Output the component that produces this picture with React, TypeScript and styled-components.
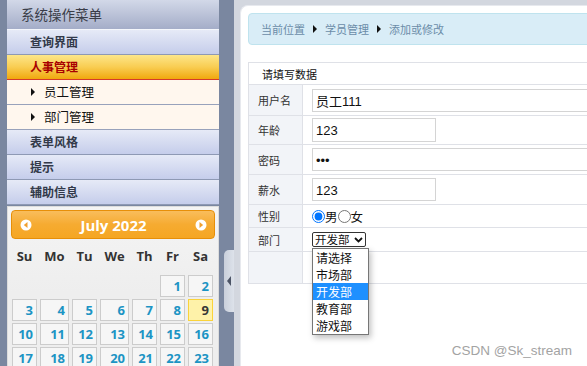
import React from 'react';
import styled, { createGlobalStyle } from 'styled-components';

const GlobalStyle = createGlobalStyle`
  html, body {
    margin: 0;
    padding: 0;
    overflow: hidden;
    width: 587px;
    height: 366px;
  }
  body {
    font-family: "Liberation Sans", "Noto Sans CJK SC", sans-serif;
  }
`;

const Page = styled.div`
  display: flex;
  width: 587px;
  height: 366px;
  background: #7a87a0;
  overflow: hidden;
`;

const Sidebar = styled.div`
  width: 212px;
  margin-left: 7px;
  flex-shrink: 0;
  display: flex;
  flex-direction: column;
`;

const SideHeader = styled.div`
  height: 29px;
  line-height: 29px;
  padding-left: 14px;
  border-bottom: 1px solid #f4f6fb;
  background: linear-gradient(#d2d8e8, #a4adc8);
  color: #3a3d48;
  font-size: 13.5px;
  font-family: "Noto Sans CJK SC", sans-serif;
`;

const MenuItem = styled.div<{ $active?: boolean }>`
  height: 24px;
  line-height: 24px;
  padding-left: 23px;
  font-family: "Noto Sans CJK SC", sans-serif;
  font-size: 12px;
  font-weight: 700;
  color: ${p => (p.$active ? '#a80000' : '#333a4a')};
  background: ${p =>
    p.$active
      ? 'linear-gradient(#fde68a, #f9cd52 50%, #f0a80e)'
      : 'linear-gradient(#e6eaf7, #c5cdeb)'};
  border-bottom: 1px solid ${p => (p.$active ? '#d63a2a' : '#8e99b4')};
`;

const SubItem = styled.div`
  height: 24px;
  line-height: 24px;
  display: flex;
  align-items: center;
  padding-left: 24px;
  gap: 9px;
  font-family: "Noto Sans CJK SC", sans-serif;
  font-size: 12.5px;
  color: #111;
  background: #fff7ee;
  border-bottom: 1px solid #98a2bb;
`;

const Arrow = styled.span`
  display: inline-block;
  width: 0;
  height: 0;
  border-left: 4px solid #111;
  border-top: 4px solid transparent;
  border-bottom: 4px solid transparent;
`;

const Calendar = styled.div`
  margin-top: 1px;
  padding: 3px;
  border: 1px solid #dcdcdc;
  background: linear-gradient(#f4f4f4, #eeeeee 40%);
  flex: 1;
`;

const CalHeader = styled.div`
  height: 27px;
  border: 1px solid #e78f08;
  border-radius: 4px;
  background: linear-gradient(#f9bd5c, #f6ab31 50%, #f5a623);
  display: flex;
  align-items: center;
  justify-content: space-between;
  padding: 0 7px 0 8px;
  color: #fff;
  font-family: "Open Sans", sans-serif;
  font-size: 15px;
  font-weight: 700;
`;

const NavIcon = styled.svg`
  width: 12px;
  height: 12px;
  display: block;
`;

const DayGrid = styled.div`
  display: grid;
  grid-template-columns: 25px 29px 25px 29px 25px 25px 25px;
  column-gap: 3px;
  row-gap: 2px;
  padding-left: 1px;
  margin-top: 2px;
  font-family: "Open Sans", sans-serif;
`;

const DayName = styled.div`
  height: 32px;
  line-height: 31px;
  text-align: center;
  font-size: 13px;
  font-weight: 700;
  color: #333;
`;

const DayCell = styled.div<{ $today?: boolean; $blank?: boolean }>`
  height: 20px;
  line-height: 20px;
  text-align: right;
  padding-right: 3px;
  font-size: 13px;
  font-weight: 700;
  visibility: ${p => (p.$blank ? 'hidden' : 'visible')};
  color: ${p => (p.$today ? '#363636' : '#1c94c4')};
  background: ${p => (p.$today ? '#fef2a9' : '#f6f6f6')};
  border: 1px solid ${p => (p.$today ? '#fad33a' : '#cccccc')};
`;

const Splitter = styled.div`
  width: 15px;
  flex-shrink: 0;
  position: relative;
`;

const Handle = styled.div`
  position: absolute;
  left: 5px;
  right: 0;
  top: 250px;
  height: 62px;
  background: linear-gradient(90deg, #c9cfdb, #dde2ea);
  border-radius: 5px 0 0 5px;
  display: flex;
  align-items: center;
  padding-left: 3px;
`;

const HandleArrow = styled.span`
  width: 0;
  height: 0;
  border-right: 4px solid #4c5466;
  border-top: 5px solid transparent;
  border-bottom: 5px solid transparent;
`;

const Frame = styled.div`
  flex: 1;
  min-width: 0;
  background: #d3d7df;
  padding: 5px 0 0 6px;
  overflow: hidden;
  position: relative;
`;

const Panel = styled.div`
  width: 420px;
  height: 100%;
  background: #fff;
  border-top: 1px solid #e7e9ee;
  border-left: 1px solid #e7e9ee;
  border-radius: 8px 0 0 0;
  padding: 7px 0 0 7px;
  box-sizing: border-box;
`;

const Breadcrumb = styled.div`
  height: 30px;
  border: 1px solid #bfe3ee;
  border-radius: 4px;
  background: #d9edf7;
  display: flex;
  align-items: center;
  gap: 8px;
  padding-left: 12px;
  font-family: "Noto Sans CJK SC", sans-serif;
  font-size: 11px;
  color: #6b8ca8;
`;

const FormTable = styled.table`
  margin-top: 17px;
  width: 420px;
  border-collapse: collapse;
  font-size: 11px;
  font-family: "Liberation Sans", "Noto Sans CJK SC", sans-serif;
  color: #222;
`;

const Row = styled.tr<{ $h: number }>`
  height: ${p => p.$h}px;
`;

const TitleCell = styled.td`
  border: 1px solid #dfe1e7;
  padding: 0 0 0 13px;
  font-family: "Noto Sans CJK SC", sans-serif;
  font-size: 11px;
  color: #111;
`;

const LabelCell = styled.td`
  width: 44px;
  border: 1px solid #dfe1e7;
  background: #f2f4f8;
  padding: 0 0 0 9px;
  font-family: "Noto Sans CJK SC", sans-serif;
  font-size: 11px;
  color: #333;
`;

const ValueCell = styled.td`
  border: 1px solid #dfe1e7;
  padding: 0 0 0 9px;
  position: relative;
`;

const TextBox = styled.div<{ $w?: number; $h: number }>`
  width: ${p => (p.$w ? `${p.$w}px` : '300px')};
  height: ${p => p.$h}px;
  line-height: ${p => p.$h}px;
  border: 1px solid #d4d4d4;
  box-sizing: border-box;
  padding-left: 3px;
  font-size: 13px;
  color: #111;
`;

const RadioGroup = styled.div`
  display: flex;
  align-items: center;
  font-family: "Noto Sans CJK SC", sans-serif;
  font-size: 12.5px;
  color: #111;
`;

const Radio = styled.input`
  width: 13px;
  height: 13px;
  margin: 0;
`;

const SelectBox = styled.div`
  width: 54px;
  height: 15px;
  box-sizing: border-box;
  border: 1px solid #333;
  border-radius: 2px;
  display: flex;
  align-items: center;
  justify-content: space-between;
  padding: 0 2px 0 2px;
  font-family: "Noto Sans CJK SC", sans-serif;
  font-size: 11.5px;
  color: #111;
  line-height: 13px;
`;

const OptionList = styled.div`
  position: absolute;
  left: 9px;
  top: 20px;
  width: 57px;
  box-sizing: border-box;
  border: 1px solid #767676;
  background: #fff;
  box-shadow: 2px 3px 6px rgba(0, 0, 0, 0.25);
  z-index: 5;
`;

const Option = styled.div<{ $selected?: boolean }>`
  height: 17px;
  line-height: 17px;
  padding-left: 3px;
  font-family: "Noto Sans CJK SC", sans-serif;
  font-size: 12px;
  color: ${p => (p.$selected ? '#fff' : '#111')};
  background: ${p => (p.$selected ? '#1e90ff' : '#fff')};
`;

const Watermark = styled.div`
  position: absolute;
  right: 15px;
  bottom: 8px;
  font-family: "Liberation Sans", sans-serif;
  font-size: 13.5px;
  color: #a3a3a3;
`;

const menuItems = ['表单风格', '提示', '辅助信息'];
const weekDays = ['Su', 'Mo', 'Tu', 'We', 'Th', 'Fr', 'Sa'];
const options = ['请选择', '市场部', '开发部', '教育部', '游戏部'];

function NavButton({ dir }: { dir: 'left' | 'right' }) {
  return (
    <NavIcon viewBox="0 0 12 12">
      <circle cx="6" cy="6" r="5.5" fill="#fff" />
      {dir === 'left' ? (
        <path d="M7.5 3 L3.8 6 L7.5 9 Z" fill="#f0a030" />
      ) : (
        <path d="M4.5 3 L8.2 6 L4.5 9 Z" fill="#f0a030" />
      )}
    </NavIcon>
  );
}

export default function App() {
  // July 2022 starts on a Friday
  const cells: (number | null)[] = [null, null, null, null, null];
  for (let d = 1; d <= 31; d++) cells.push(d);

  return (
    <>
      <GlobalStyle />
      <Page>
        <Sidebar>
          <SideHeader>系统操作菜单</SideHeader>
          <MenuItem>查询界面</MenuItem>
          <MenuItem $active>人事管理</MenuItem>
          <SubItem>
            <Arrow />
            员工管理
          </SubItem>
          <SubItem>
            <Arrow />
            部门管理
          </SubItem>
          {menuItems.map(m => (
            <MenuItem key={m}>{m}</MenuItem>
          ))}
          <Calendar>
            <CalHeader>
              <NavButton dir="left" />
              <span>July 2022</span>
              <NavButton dir="right" />
            </CalHeader>
            <DayGrid>
              {weekDays.map(w => (
                <DayName key={w}>{w}</DayName>
              ))}
              {cells.map((d, i) => (
                <DayCell key={i} $blank={d === null} $today={d === 9}>
                  {d}
                </DayCell>
              ))}
            </DayGrid>
          </Calendar>
        </Sidebar>

        <Splitter>
          <Handle>
            <HandleArrow />
          </Handle>
        </Splitter>

        <Frame>
          <Panel>
            <Breadcrumb>
              <span>当前位置</span>
              <Arrow />
              <span>学员管理</span>
              <Arrow />
              <span>添加或修改</span>
            </Breadcrumb>
            <FormTable>
              <tbody>
                <Row $h={22}>
                  <TitleCell colSpan={2}>请填写数据</TitleCell>
                </Row>
                <Row $h={31}>
                  <LabelCell>用户名</LabelCell>
                  <ValueCell>
                    <TextBox $h={23}>员工111</TextBox>
                  </ValueCell>
                </Row>
                <Row $h={29}>
                  <LabelCell>年龄</LabelCell>
                  <ValueCell>
                    <TextBox $w={124} $h={24}>123</TextBox>
                  </ValueCell>
                </Row>
                <Row $h={30}>
                  <LabelCell>密码</LabelCell>
                  <ValueCell>
                    <TextBox $h={23}>•••</TextBox>
                  </ValueCell>
                </Row>
                <Row $h={30}>
                  <LabelCell>薪水</LabelCell>
                  <ValueCell>
                    <TextBox $w={124} $h={23}>123</TextBox>
                  </ValueCell>
                </Row>
                <Row $h={23}>
                  <LabelCell>性别</LabelCell>
                  <ValueCell>
                    <RadioGroup>
                      <Radio type="radio" name="sex" defaultChecked />男
                      <Radio type="radio" name="sex" />女
                    </RadioGroup>
                  </ValueCell>
                </Row>
                <Row $h={24}>
                  <LabelCell>部门</LabelCell>
                  <ValueCell>
                    <SelectBox>
                      <span>开发部</span>
                      <svg width="9" height="6" viewBox="0 0 9 6">
                        <path d="M1 1 L4.5 4.5 L8 1" stroke="#111" strokeWidth="1.8" fill="none" />
                      </svg>
                    </SelectBox>
                    <OptionList>
                      {options.map(o => (
                        <Option key={o} $selected={o === '开发部'}>
                          {o}
                        </Option>
                      ))}
                    </OptionList>
                  </ValueCell>
                </Row>
                <Row $h={32}>
                  <LabelCell />
                  <ValueCell />
                </Row>
              </tbody>
            </FormTable>
          </Panel>
          <Watermark>CSDN @Sk_stream</Watermark>
        </Frame>
      </Page>
    </>
  );
}
